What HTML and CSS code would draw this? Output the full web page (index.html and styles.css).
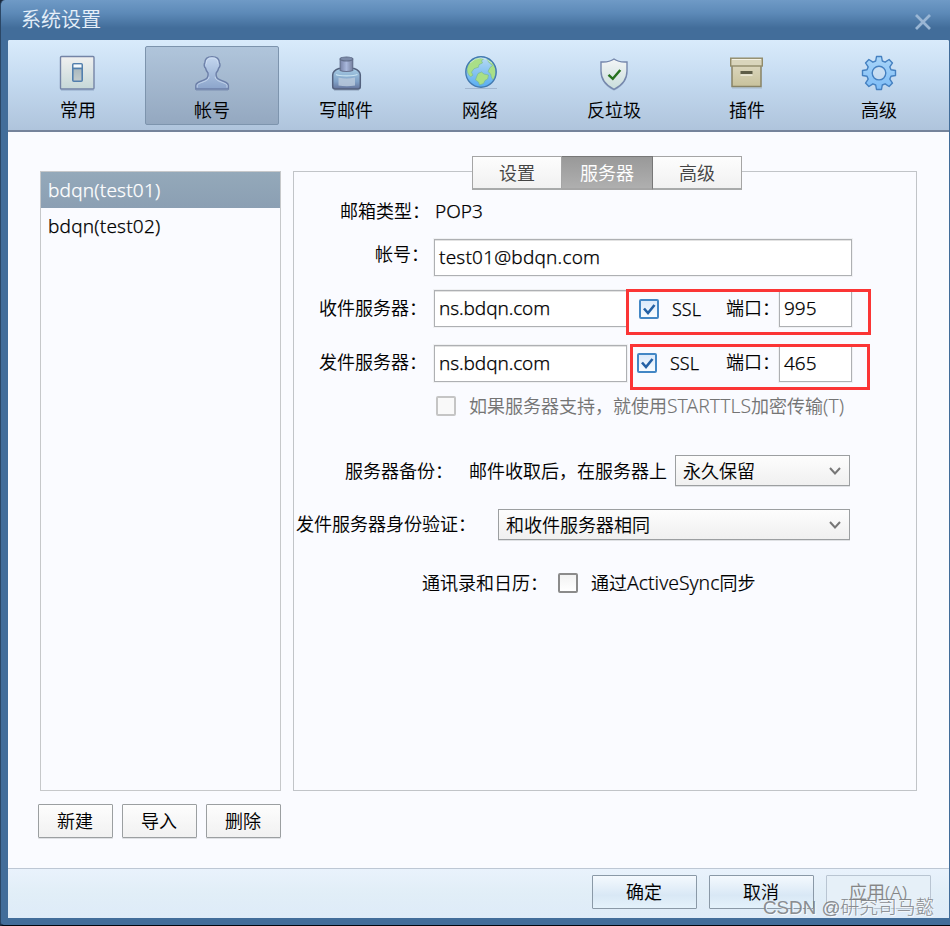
FILE: index.html
```html
<!DOCTYPE html>
<html lang="zh-CN">
<head>
<meta charset="utf-8">
<title>系统设置</title>
<link rel="stylesheet" href="styles.css">
</head>
<body>
<div class="window">
  <header class="titlebar">
    <h1>系统设置</h1>
    <svg class="close" width="18" height="18" viewBox="0 0 18 18"><path d="M2 2L16 16M16 2L2 16"/></svg>
  </header>
  <div class="client">
    <nav class="toolbar">
      <div class="tool">
        <svg width="38" height="38" viewBox="0 0 38 38">
          <defs>
            <linearGradient id="gPlate" x2="0" y2="1"><stop stop-color="#f0f0f0"/><stop offset="1" stop-color="#c6d8d8"/></linearGradient>
            <linearGradient id="gSwitch" x2="0" y2="1"><stop stop-color="#9fb0b8"/><stop offset="1" stop-color="#c4cccc"/></linearGradient>
          </defs>
          <path d="M2 36.200h33" stroke="#8fa5c4" stroke-width="1" opacity=".7"/>
          <rect x="1.500" y="2.500" width="33.500" height="32.500" rx="1" fill="url(#gPlate)" stroke="#7484a6" stroke-width="1.400"/>
          <rect x="13.800" y="9.800" width="9.400" height="17.400" rx="1" fill="url(#gSwitch)" stroke="#527fae" stroke-width="1.600"/>
          <path d="M14.600 10.600h7.800v3h-7.800z" fill="#f4faff"/><path d="M14 14.500h9" stroke="#527fae" stroke-width="1.400"/>
        </svg>
        <span>常用</span>
      </div>
      <div class="tool active">
        <svg width="38" height="38" viewBox="0 0 38 38">
          <defs><linearGradient id="gUser" x2="0" y2="1"><stop stop-color="#c4d7ef"/><stop offset="1" stop-color="#8ba4cb"/></linearGradient></defs>
          <path d="M3 36.500h32" stroke="#8499b8" opacity=".7"/>
          <path d="M19 2.600c-5 0-7.200 2.400-7.200 6.600-.9.500-.9 3.800.7 4.800.5 2.500 1.600 4 2.500 5 .8 4-1 6-4.500 7.200C6 27.900 2.800 29 2.800 31.500V35h32.600v-3.500c0-2.500-3.200-3.600-7.700-5.300-3.500-1.200-5.300-3.200-4.500-7.200.9-1 2-2.500 2.500-5 1.600-1 1.600-4.300.7-4.800 0-4.200-2.400-6.600-7.400-6.600z" fill="url(#gUser)" stroke="#6c7fa8" stroke-width="1.400"/>
          <path d="M13.200 10c0-4 1.800-6 5.800-6s6 2 6 6M4.200 33.600v-2c0-1.600 3-2.600 7.400-4.200 3-1.200 4.300-2.700 4.500-4.600M34 33.600v-2c0-1.600-3-2.600-7.400-4.200-3-1.200-4.300-2.700-4.500-4.600" fill="none" stroke="#d6e3f5" opacity=".7"/>
        </svg>
        <span>帐号</span>
      </div>
      <div class="tool">
        <svg width="38" height="38" viewBox="0 0 38 38">
          <defs><linearGradient id="gInk" x2="0" y2="1"><stop stop-color="#a6cce5"/><stop offset=".65" stop-color="#7fa0c6"/><stop offset="1" stop-color="#65749c"/></linearGradient>
          <linearGradient id="gNeck"><stop stop-color="#7884a8"/><stop offset=".5" stop-color="#a9b8dc"/><stop offset="1" stop-color="#76819f"/></linearGradient></defs>
          <path d="M7 36h25" stroke="#8797b3" stroke-width="1.500" opacity=".6"/>
          <path d="M12 14.500C7.500 16 5.700 18.500 5.700 21v11.500c0 1.800.8 2.500 2.500 2.500h22.600c1.700 0 2.500-.7 2.500-2.500V21c0-2.500-1.800-5-6.300-6.500z" fill="url(#gInk)" stroke="#54627e" stroke-width="1.500"/>
          <path d="M13.200 5v11.500c2.500 1.300 9.800 1.300 12.500 0V5z" fill="url(#gNeck)" stroke="#65718f" stroke-width="1.200"/>
          <ellipse cx="19.450" cy="5" rx="6.300" ry="2" fill="#7c8ba9" stroke="#626f8b" stroke-width="1.200"/>
          <path d="M9 20.500c3 1.800 18 1.800 21.500 0" fill="none" stroke="#c8e3f1" stroke-width="1.300"/>
          <path d="M11.500 23.500q8 2 16.500 0v8q-8 1.500-16.500 0z" fill="#b8c9dc" opacity=".85"/>
        </svg>
        <span>写邮件</span>
      </div>
      <div class="tool">
        <svg width="38" height="38" viewBox="0 0 38 38">
          <defs><linearGradient id="gSea" x2="0" y2="1"><stop stop-color="#b8daf2"/><stop offset="1" stop-color="#58adf2"/></linearGradient></defs>
          <path d="M4 34.500h32" stroke="#95aac4" opacity=".7"/>
          <circle cx="20" cy="18" r="15.200" fill="url(#gSea)"/>
          <path d="M6.500 13C8 8 12.500 4.500 18 3.900l4.500 1-2 2 1 2-3.500 1.800-.5 2.500-4.500 1.500-2.500 3.500 1.500 3-2.500 1.500C6.500 20 5.500 16.500 6.500 13zM25.500 5c4.500 1.500 7.500 4.500 8.700 8.500 1.300 4.500.3 9-2.200 12.500l-1.700-3-.6-3-2.700-2.500 2-4 2.500-2-3-2.500zM17 19.500l3.500-1.500 2.500 2 4.500 1-.8 4-2.700 1.500-1.500 3-4 1.500-1-3-3-2 1-3z" fill="#a9df87" stroke="#79b998" stroke-width=".7"/>
          <circle cx="20" cy="18" r="15.200" fill="none" stroke="#437ab0" stroke-width="1.400"/>
          <path d="M9 9Q19-1 31 9" fill="none" stroke="#e2f3ee" stroke-width="1" opacity=".6"/>
        </svg>
        <span>网络</span>
      </div>
      <div class="tool">
        <svg width="38" height="38" viewBox="0 0 38 38">
          <defs><linearGradient id="gShield" x2="0" y2="1"><stop stop-color="#f3f5f6"/><stop offset="1" stop-color="#c9dddb"/></linearGradient></defs>
          <path d="M19 5.200c-3.500 2.500-8.500 3-13 2.700V17c0 8.500 5 14.500 13 18.300 8-3.800 13-9.800 13-18.300V7.900c-4.500.3-9.500-.2-13-2.700z" transform="translate(0 1.500)" fill="#8ea1bf" opacity=".6"/>
          <path d="M19 5c-3.500 2.500-8.500 3.200-13 2.900V17c0 8.500 5 14.500 13 18.300 8-3.800 13-9.800 13-18.300V7.900c-4.500.3-9.500-.4-13-2.900z" fill="url(#gShield)" stroke="#7587ac" stroke-width="1.400"/>
          <path d="M13.500 20.800l4.300 4L25.300 16" fill="none" stroke="#26711e" stroke-width="2.500"/>
        </svg>
        <span>反垃圾</span>
      </div>
      <div class="tool">
        <svg width="38" height="38" viewBox="1 0 38 38">
          <defs><linearGradient id="gBox" x2="0" y2="1"><stop stop-color="#dcd7be"/><stop offset="1" stop-color="#c8c29c"/></linearGradient></defs>
          <path d="M5 34h30" stroke="#9dacba" opacity=".7"/>
          <rect x="5" y="10" width="29" height="22.500" fill="url(#gBox)" stroke="#888365" stroke-width="1.500"/>
          <rect x="3.700" y="4.200" width="31.600" height="7.800" fill="#d9d5bc" stroke="#918b6a" stroke-width="1.400"/>
          <path d="M5 5.500h29" stroke="#f3f1e4"/>
          <path d="M13.500 17h12v3.300h-12z" fill="#5e5d47"/><path d="M13.500 21h12" stroke="#f1eedc" stroke-width="1.400"/>
        </svg>
        <span>插件</span>
      </div>
      <div class="tool">
        <svg width="38" height="38" viewBox="0 0 38 38">
          <defs><linearGradient id="gGear" x2="0" y2="1"><stop stop-color="#a9d5f8"/><stop offset="1" stop-color="#7dbcf7"/></linearGradient></defs>
          <path d="M16.500 2.500h5l.8 4.500 2.800 1.200 4-2.700 3.400 3.400-2.700 4 1.200 2.800 4.500.8v5l-4.500.8-1.200 2.800 2.700 4-3.400 3.400-4-2.700-2.800 1.200-.8 4.500h-5l-.8-4.500-2.800-1.200-4 2.700-3.400-3.400 2.700-4L7 22.300l-4.500-.8v-5l4.500-.8 1.200-2.800-2.700-4 3.400-3.400 4 2.700L15.700 7zM19 12.300a6.800 6.800 0 1 0 0 13.600 6.800 6.800 0 0 0 0-13.600z" fill="url(#gGear)" fill-rule="evenodd" stroke="#4580c0" stroke-width="1.400" stroke-linejoin="round"/>
        </svg>
        <span>高级</span>
      </div>
    </nav>

    <main class="content">
      <section class="accounts">
        <ul class="account-list">
          <li class="selected">bdqn(test01)</li>
          <li>bdqn(test02)</li>
        </ul>
        <div class="account-actions">
          <button>新建</button>
          <button>导入</button>
          <button>删除</button>
        </div>
      </section>

      <section class="panel">
        <div class="tabs">
          <div class="tab">设置</div>
          <div class="tab current">服务器</div>
          <div class="tab">高级</div>
        </div>
        <div class="row type">
          <span class="label">邮箱类型：</span><span class="latin">POP3</span>
        </div>
        <div class="row account">
          <span class="label">帐号：</span><div class="field latin">test01@bdqn.com</div>
        </div>
        <div class="row server incoming">
          <span class="label">收件服务器：</span><div class="field latin host">ns.bdqn.com</div>
          <span class="check on"><svg width="16" height="16" viewBox="0 0 16 16"><path d="M3 7.500L7 12L13.500 4"/></svg></span>
          <span class="ssl latin">SSL</span><span class="port-label">端口：</span><div class="field latin port">995</div>
          <div class="mark"></div>
        </div>
        <div class="row server outgoing">
          <span class="label">发件服务器：</span><div class="field latin host">ns.bdqn.com</div>
          <span class="check on"><svg width="16" height="16" viewBox="0 0 16 16"><path d="M3 7.500L7 12L13.500 4"/></svg></span>
          <span class="ssl latin">SSL</span><span class="port-label">端口：</span><div class="field latin port">465</div>
          <div class="mark"></div>
        </div>
        <div class="row starttls">
          <span class="check disabled"></span><span>如果服务器支持，就使用<span class="tls">STARTTLS</span>加密传输<span class="tls">(T)</span></span>
        </div>
        <div class="row backup">
          <span class="label">服务器备份：</span><span class="hint">邮件收取后，在服务器上</span>
          <div class="select"><span>永久保留</span><svg width="14" height="10" viewBox="0 0 14 10"><path d="M2 2L7 7.500L12 2"/></svg></div>
        </div>
        <div class="row auth">
          <span class="label">发件服务器身份验证：</span>
          <div class="select"><span>和收件服务器相同</span><svg width="14" height="10" viewBox="0 0 14 10"><path d="M2 2L7 7.500L12 2"/></svg></div>
        </div>
        <div class="row contacts">
          <span class="label">通讯录和日历：</span><span class="check"></span><span>通过<span class="sync">ActiveSync</span>同步</span>
        </div>
      </section>
    </main>

    <footer class="footer">
      <button>确定</button>
      <button>取消</button>
      <button disabled>应用<span class="key">(A)</span></button>
    </footer>
  </div>
  <div class="watermark">CSDN @研究司马懿</div>
</div>
</body>
</html>
```
FILE: styles.css
```css
* { box-sizing: border-box; }
body {
  margin: 0;
  background: #1d2b3f;
  color: #000;
  font: 350 18px/24px "Noto Sans", "Noto Sans CJK SC", sans-serif;
  -webkit-text-stroke: .08px;
}
span, div, li, button, h1 { white-space: nowrap; }
.window {
  position: relative;
  display: flex;
  flex-direction: column;
  width: 950px;
  height: 926px;
  padding: 0 1px 7px 7px;
  border-left: 1px solid #2b4766;
  border-bottom: 1px solid #02050d;
  border-radius: 5px 0 0 4px;
  background: linear-gradient(#6f9ac6 0, #5d8ab8 13px, #426d9a 28px, #426d9a 100%);
}
.titlebar {
  display: flex;
  flex: none;
  justify-content: space-between;
  height: 40px;
  padding: 8px 17px 0 13px;
}
.titlebar h1 {
  margin: 0;
  color: #e6f0fa;
  font-size: 20px;
  font-weight: 350;
  line-height: 24px;
}
.close { margin-top: 5px; fill: none; stroke: #9ab6d4; stroke-width: 2.8; }
.client {
  display: flex;
  flex: 1;
  flex-direction: column;
  min-height: 0;
  border-radius: 2px 2px 0 0;
  background: #fafbff;
  overflow: hidden;
}
.toolbar {
  display: flex;
  flex: none;
  height: 92px;
  padding: 6px 0 0 3px;
  border-bottom: 2px solid #75839b;
  background: linear-gradient(#d9ebfb, #c4daf0 45%, #afc4dc);
}
.tool {
  display: flex;
  flex: none;
  flex-direction: column;
  align-items: center;
  width: 134px;
  height: 79px;
  padding-top: 8px;
}
.tool:nth-child(n+6) { width: 132px; }
.tool svg { flex: none; fill: none; }
.tool span { margin-top: 6px; }
.tool.active {
  padding-top: 7px;
  border: 1px solid #7d94ad;
  border-radius: 2px;
  background: linear-gradient(#b0c5db, #94a8c0);
}
.content {
  display: flex;
  flex: none;
  gap: 12px;
  height: 736px;
  padding: 39px 32px 0 30px;
}
.accounts { width: 243px; }
.account-list {
  height: 620px;
  margin: 0 0 13px 2px;
  padding: 0;
  border: 1px solid #c6c8ca;
  list-style: none;
  font-size: 19px;
  letter-spacing: .2px;
  -webkit-text-stroke: .25px;
}
.account-list li { height: 36px; padding: 0 0 0 7px; line-height: 37px; }
.account-list .selected { color: #fff; background: linear-gradient(#94a9ba, #8b9fb3); }
.account-actions { display: flex; gap: 9px; }
button {
  width: 75px;
  height: 34px;
  padding: 0 1px 0 0;
  border: 1px solid #9b9fa1;
  border-radius: 1px;
  background: linear-gradient(#fdfdfd, #f1f1f1);
  box-shadow: 0 1px #dfe1e4;
  color: #000;
  font: inherit;
  -webkit-text-stroke: .08px;
}
.panel {
  width: 624px;
  height: 620px;
  border: 1px solid #c1c4c8;
}
.tabs { display: flex; width: 270px; height: 34px; margin: -16px 0 0 178px; }
.tab {
  flex: 1;
  border: 1px solid #a5a5a5;
  border-bottom: 2px solid #a8aaaa;
  background: linear-gradient(#fdfdfd, #f1f1f1);
  color: #444;
  line-height: 33px;
  text-align: center;
}
.tab + .tab { border-left: 0; }
.tab.current { flex: 0 0 91px; border-color: #777; border-bottom-color: #a5a5a5; background: linear-gradient(#999, #afafaf); color: #fff; }
.row { position: relative; display: flex; }
.label { flex: none; width: 140px; }
.latin { font-size: 19px; -webkit-text-stroke: .25px; }
.field {
  flex: none;
  height: 37px;
  padding-left: 4px;
  border: 1px solid #aeb0b3;
  background: #fff;
  box-shadow: inset 0 1px #e2e2e2, 0 0 0 1px #f0f1f3;
  line-height: 35px;
}
.type { height: 24px; margin-top: 9px; }
.type .label { width: 141px; padding-left: 46px; }
.account { margin-top: 16px; }
.account .label { padding: 3px 0 0 81px; }
.account .field { width: 418px; letter-spacing: .2px; }
.server .label { padding: 6px 0 0 25px; }
.incoming { margin-top: 14px; }
.outgoing { margin-top: 18px; }
.host { width: 193px; letter-spacing: -.1px; }
.check {
  display: flex;
  flex: none;
  align-items: center;
  justify-content: center;
  width: 20px;
  height: 20px;
  border: 2px solid #8b8b8b;
  border-radius: 2px;
  background: linear-gradient(#f2f2f2, #fff);
}
.check.on { border-color: #4387c5; background: linear-gradient(#dceafa, #f8fcff); }
.check svg { fill: none; stroke: #2461a5; stroke-width: 2.6; }
.check.disabled { border-color: #c5c5c5; background: #f9f9f9; }
.incoming .check { margin: 9px 0 0 12px; }
.outgoing .check { margin: 8px 0 0 10px; }
.ssl { width: 54px; margin: 7px 0 0 13px; font-size: 18px; }
.outgoing .ssl { width: 56px; margin-top: 6px; }
.port-label { width: 53px; margin-top: 6px; }
.outgoing .label, .outgoing .port-label { position: relative; top: -1px; }
.port { width: 73px; }
.mark { position: absolute; left: 332px; top: -1px; width: 245px; height: 46px; border: 3px solid #fb3535; }
.outgoing .mark { left: 336px; width: 240px; }
.starttls { gap: 13px; margin: 12px 0 0 142px; color: #747474; }
.starttls .check { margin-top: 2px; }
.tls { font-size: 19.3px; }
.backup { margin-top: 37px; }
.backup .label { width: 175px; padding: 4px 0 0 51px; }
.hint { width: 206px; padding-top: 4px; }
.select {
  display: flex;
  align-items: center;
  justify-content: space-between;
  width: 175px;
  height: 31px;
  padding: 1px 7px 0;
  border: 1px solid #9c9fa1;
  background: linear-gradient(#fdfdfd, #f0f0f0);
  box-shadow: 0 1px #dfe1e4;
}
.select svg { fill: none; stroke: #777; stroke-width: 2; }
.auth { margin-top: 23px; }
.auth .label { width: 204px; padding: 3px 0 0 2px; }
.auth .select { width: 352px; }
.contacts { margin-top: 31px; }
.contacts .label { width: 264px; padding-left: 128px; }
.contacts .check { margin: 2px 13px 0 0; }
.sync { font-size: 19.4px; -webkit-text-stroke: .2px; }
.footer {
  display: flex;
  flex: 1;
  justify-content: flex-end;
  gap: 12px;
  padding: 6px 18px 0 0;
  border-top: 1px solid #bdc7d4;
  background: linear-gradient(#e9f2fc, #e1eef7 50%, #deebf8);
}
.footer button { width: 105px; border-color: #8a99a7; background: linear-gradient(#f4f9fe, #d9e8f5 60%, #e4f2fb); box-shadow: none; }
.footer button:disabled { border-color: #b9c5d2; background: #e6f0f8; color: #858585; }
.key { font-size: 19px; }
.watermark {
  position: absolute;
  left: 762px;
  top: 895px;
  color: rgba(125, 128, 132, .9);
  font: 300 18.800px/26px "Liberation Sans", "Noto Sans CJK SC", sans-serif;
  text-shadow: 1px 1px #f6f8fa;
}
```
